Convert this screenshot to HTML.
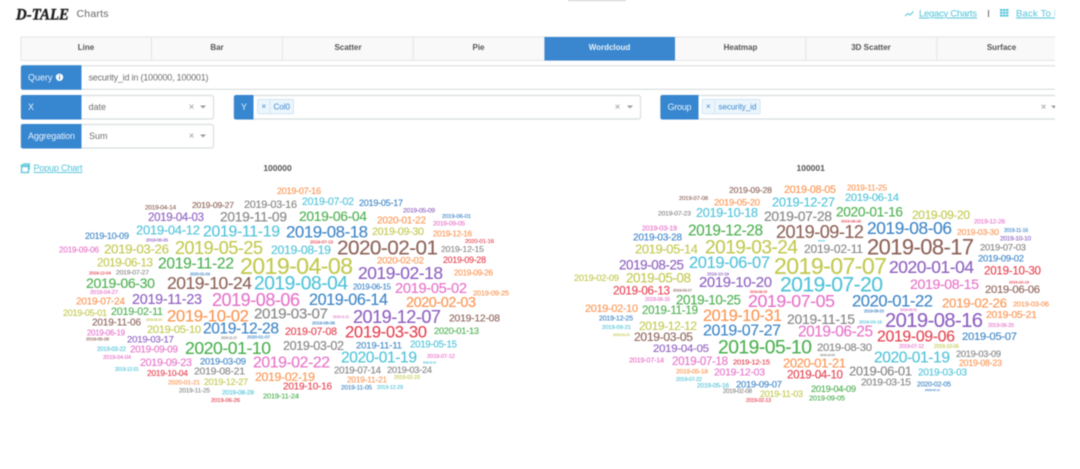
<!DOCTYPE html>
<html><head><meta charset="utf-8"><title>D-Tale Charts</title>
<style>
html,body{margin:0;padding:0;background:#fff;width:1080px;height:469px;overflow:hidden}
svg{display:block;filter:blur(.45px)}
text{font-family:"Liberation Sans",sans-serif}
#w text{dominant-baseline:central;stroke-width:.12}
.b{fill:#3d85c6;stroke:#3d85c6}.o{fill:#fb9450;stroke:#fb9450}.g{fill:#4cb050;stroke:#4cb050}.r{fill:#e5404f;stroke:#e5404f}.p{fill:#8e5fc0;stroke:#8e5fc0}.n{fill:#8d6258;stroke:#8d6258}.k{fill:#e672c9;stroke:#e672c9}.y{fill:#858585;stroke:#858585}.l{fill:#c2c94f;stroke:#c2c94f}.c{fill:#4fc3d9;stroke:#4fc3d9}
.t{font-size:8px;font-weight:bold;fill:#555;text-anchor:middle}
.v{font-size:9px;fill:#6f6f6f}
.w{font-size:9px;fill:#e8f1fa}
.x{font-size:10px;fill:#999;text-anchor:middle}
.h{font-size:8px;fill:#3a87cf}
.a{font-size:9.5px;fill:#4fc3d9;text-decoration:underline}
</style></head><body>
<svg width="1080" height="469" viewBox="0 0 1080 469" xmlns="http://www.w3.org/2000/svg">
<rect width="1080" height="469" fill="#fff"/>
<rect x="568" y="-1" width="58" height="2" fill="#ccc"/>
<!-- header -->
<text x="16" y="19.500" font-size="15.500" font-weight="bold" font-style="italic" fill="#222" stroke="#222" stroke-width=".4" textLength="53" lengthAdjust="spacingAndGlyphs" style="font-family:'Liberation Serif',serif">D-TALE</text>
<text x="76.500" y="16.800" font-size="10.500" fill="#666" textLength="32">Charts</text>
<path d="M905 16l3-2.500 2 1.500 3.500-3.500" fill="none" stroke="#4fc3d9" stroke-width="1"/>
<text class="a" x="919" y="16.500" textLength="58">Legacy Charts</text>
<rect x="988" y="10" width="1" height="7" fill="#666"/>
<g fill="#4fc3d9"><rect x="1000" y="9" width="2.400" height="2"/><rect x="1003" y="9" width="2.400" height="2"/><rect x="1006" y="9" width="2.400" height="2"/><rect x="1000" y="11.800" width="2.400" height="2"/><rect x="1003" y="11.800" width="2.400" height="2"/><rect x="1006" y="11.800" width="2.400" height="2"/><rect x="1000" y="14.600" width="2.400" height="2"/><rect x="1003" y="14.600" width="2.400" height="2"/><rect x="1006" y="14.600" width="2.400" height="2"/></g>
<text class="a" x="1016" y="16.500" style="letter-spacing:.2px">Back To Data</text>
<rect x="1055" y="0" width="25" height="30" fill="#fff"/>
<!-- tabs -->
<rect x="21" y="37" width="1034" height="23.500" fill="#f9f9f9"/>
<path d="M21 60.500V37H1055M21 60.500H1055M151.500 37V60.500M282.400 37V60.500M413.200 37V60.500M544.500 37V60.500M805.800 37V60.500M936.700 37V60.500" fill="none" stroke="#e4e4e4" stroke-width="1"/>
<rect x="544.500" y="37" width="130.500" height="23.500" fill="#3a87cf"/>
<text class="t" x="86" y="50">Line</text>
<text class="t" x="217" y="50">Bar</text>
<text class="t" x="348" y="50">Scatter</text>
<text class="t" x="478.500" y="50">Pie</text>
<text class="t" x="609.500" y="50" style="fill:#e8f1fa">Wordcloud</text>
<text class="t" x="740.500" y="50">Heatmap</text>
<text class="t" x="871" y="50">3D Scatter</text>
<text class="t" x="1001.500" y="50">Surface</text>
<!-- query -->
<rect x="21" y="65.800" width="1040" height="23.500" rx="2" fill="#fff" stroke="#d9dee0" stroke-width="1.200"/>
<rect x="1055" y="60" width="25" height="32" fill="#fff"/>
<path d="M23 65.300H81.500V89.800H23a2 2 0 0 1-2-2V67.300a2 2 0 0 1 2-2z" fill="#3686d0"/>
<text class="w" x="28" y="80.500">Query</text>
<circle cx="59.500" cy="77.300" r="3.700" fill="#fff"/><rect x="59" y="76.500" width="1" height="3" fill="#3686d0"/><rect x="59" y="75" width="1" height="1" fill="#3686d0"/>
<text class="v" x="88.500" y="80.500" textLength="120">security_id in (100000, 100001)</text>
<!-- X -->
<rect x="21" y="95.500" width="192.500" height="23.500" rx="2" fill="#fff" stroke="#d9dee0" stroke-width="1.200"/>
<path d="M23 95H81.500V119.500H23a2 2 0 0 1-2-2V97a2 2 0 0 1 2-2z" fill="#3686d0"/>
<text class="w" x="28" y="110">X</text>
<text class="v" x="88.500" y="110">date</text>
<text class="x" x="191.500" y="110">×</text>
<path d="M200 105.500h6l-3 3z" fill="#999"/>
<!-- Y -->
<rect x="234" y="95.500" width="406.500" height="23.500" rx="2" fill="#fff" stroke="#d9dee0" stroke-width="1.200"/>
<path d="M236 95H253.500V119.500H236a2 2 0 0 1-2-2V97a2 2 0 0 1 2-2z" fill="#3686d0"/>
<text class="w" x="241" y="110">Y</text>
<rect x="257.600" y="99.300" width="36" height="14.500" rx="1.500" fill="#ebf5fc" stroke="#cfe3f2" stroke-width=".8"/>
<path d="M270 99.300V113.800" stroke="#cfe3f2" stroke-width=".8"/>
<text class="h" x="261.500" y="109">×</text>
<text class="h" x="273.500" y="109.500" textLength="16.500">Col0</text>
<text class="x" x="617.500" y="110">×</text>
<path d="M627 105.500h6l-3 3z" fill="#999"/>
<!-- Group -->
<rect x="660.500" y="95.500" width="400" height="23.500" rx="2" fill="#fff" stroke="#d9dee0" stroke-width="1.200"/>
<path d="M662.500 95H698.500V119.500H662.500a2 2 0 0 1-2-2V97a2 2 0 0 1 2-2z" fill="#3686d0"/>
<text class="w" x="667.500" y="110" textLength="24">Group</text>
<rect x="702.200" y="99.300" width="58" height="14.500" rx="1.500" fill="#ebf5fc" stroke="#cfe3f2" stroke-width=".8"/>
<path d="M714.600 99.300V113.800" stroke="#cfe3f2" stroke-width=".8"/>
<text class="h" x="706" y="109">×</text>
<text class="h" x="718.500" y="109.500" textLength="38">security_id</text>
<text class="x" x="1043.500" y="110">×</text>
<path d="M1051 105.500h6l-3 3z" fill="#999"/>
<rect x="1055" y="93" width="25" height="30" fill="#fff"/>
<!-- Aggregation -->
<rect x="21" y="124.500" width="192.500" height="23.500" rx="2" fill="#fff" stroke="#d9dee0" stroke-width="1.200"/>
<path d="M23 124H81.500V148.500H23a2 2 0 0 1-2-2V126a2 2 0 0 1 2-2z" fill="#3686d0"/>
<text class="w" x="28" y="139" textLength="47">Aggregation</text>
<text class="v" x="89" y="139">Sum</text>
<text class="x" x="191.500" y="139">×</text>
<path d="M200 134.500h6l-3 3z" fill="#999"/>
<!-- popup -->
<path d="M21.500 165h7v7.500h-7zM21.500 166.500h7" fill="none" stroke="#4fc3d9" stroke-width="1.200"/>
<path d="M23 163.500h6.500v6" fill="none" stroke="#4fc3d9" stroke-width=".8"/>
<text class="a" x="33.500" y="171" textLength="49" style="font-size:9px">Popup Chart</text>
<text x="277.500" y="171" font-size="8.500" font-weight="bold" fill="#555" text-anchor="middle">100000</text>
<text x="810.700" y="171" font-size="8.500" font-weight="bold" fill="#555" text-anchor="middle">100001</text>
<!-- left cloud -->
<g id="w">
<text class="n" x="145" y="208" textLength="31" font-size="6.400">2019-04-14</text>
<text class="n" x="192" y="205" textLength="42" font-size="8.600">2019-09-27</text>
<text class="y" x="244" y="205" textLength="53" font-size="10.900">2019-03-16</text>
<text class="p" x="148" y="218" textLength="56" font-size="11.500">2019-04-03</text>
<text class="y" x="220" y="217" textLength="67" font-size="13.800">2019-11-09</text>
<text class="c" x="136" y="230" textLength="64" font-size="13.100">2019-04-12</text>
<text class="c" x="203" y="232" textLength="77" font-size="15.800">2019-11-19</text>
<text class="b" x="85" y="236" textLength="44" font-size="9.100">2019-10-09</text>
<text class="p" x="146" y="240" textLength="22" font-size="4.600">2019-05-25</text>
<text class="k" x="59" y="250" textLength="40" font-size="8.100">2019-09-06</text>
<text class="l" x="104" y="249" textLength="65" font-size="13.300">2019-03-26</text>
<text class="l" x="175" y="248" textLength="88" font-size="18">2019-05-25</text>
<text class="c" x="271" y="250" textLength="60" font-size="12.300">2019-08-19</text>
<text class="l" x="97" y="263" textLength="56" font-size="11.600">2019-06-13</text>
<text class="g" x="158" y="264" textLength="76" font-size="15.600">2019-11-22</text>
<text class="l" x="240" y="266" textLength="113" font-size="23.200">2019-04-08</text>
<text class="r" x="89" y="273" textLength="22" font-size="4.600">2019-12-04</text>
<text class="y" x="116" y="273" textLength="33" font-size="6.700">2019-07-27</text>
<text class="b" x="190" y="274" textLength="20" font-size="4.100">2020-01-04</text>
<text class="g" x="86" y="283" textLength="69" font-size="14.100">2019-06-30</text>
<text class="n" x="167" y="283" textLength="85" font-size="17.500">2019-10-24</text>
<text class="c" x="254" y="284" textLength="94" font-size="19.200">2019-08-04</text>
<text class="k" x="90" y="293" textLength="28" font-size="5.800">2019-04-27</text>
<text class="o" x="76" y="302" textLength="49" font-size="10">2019-07-24</text>
<text class="p" x="132" y="300" textLength="70" font-size="14.300">2019-11-23</text>
<text class="k" x="212" y="300" textLength="88" font-size="18">2019-08-06</text>
<text class="b" x="309" y="300" textLength="79" font-size="16.200">2019-06-14</text>
<text class="o" x="406" y="303" textLength="70" font-size="14.400">2020-02-03</text>
<text class="l" x="63" y="313" textLength="44" font-size="9">2019-05-01</text>
<text class="g" x="111" y="312" textLength="52" font-size="10.700">2019-02-11</text>
<text class="l" x="146" y="320" textLength="16" font-size="3.200">2019-05-24</text>
<text class="o" x="167" y="316" textLength="82" font-size="16.800">2019-10-02</text>
<text class="y" x="254" y="314" textLength="74" font-size="15.200">2019-03-07</text>
<text class="p" x="353" y="317" textLength="88" font-size="18.100">2019-12-07</text>
<text class="k" x="333" y="317" textLength="16" font-size="3.300">2019-11-11</text>
<text class="n" x="449" y="319" textLength="51" font-size="10.400">2019-12-08</text>
<text class="n" x="92" y="323" textLength="49" font-size="10">2019-11-06</text>
<text class="k" x="87" y="333" textLength="38" font-size="7.800">2019-06-19</text>
<text class="l" x="147" y="330" textLength="54" font-size="11.100">2019-05-10</text>
<text class="b" x="203" y="329" textLength="76" font-size="15.600">2019-12-28</text>
<text class="b" x="312" y="324" textLength="23" font-size="4.800">2019-08-06</text>
<text class="r" x="285" y="332" textLength="52" font-size="10.600">2019-07-08</text>
<text class="r" x="345" y="332" textLength="82" font-size="16.700">2019-03-30</text>
<text class="g" x="434" y="331" textLength="45" font-size="9.200">2020-01-13</text>
<text class="n" x="86" y="340" textLength="23" font-size="4.800">2019-05-28</text>
<text class="p" x="127" y="340" textLength="47" font-size="9.600">2019-03-17</text>
<text class="y" x="221" y="338" textLength="16" font-size="3.200">2019-11-27</text>
<text class="b" x="247" y="338" textLength="23" font-size="4.800">2020-01-07</text>
<text class="c" x="97" y="350" textLength="29" font-size="6">2019-03-22</text>
<text class="k" x="130" y="350" textLength="48" font-size="9.900">2019-09-09</text>
<text class="g" x="185" y="348" textLength="86" font-size="17.600">2020-01-10</text>
<text class="y" x="283" y="346" textLength="61" font-size="12.600">2019-03-02</text>
<text class="b" x="356" y="345" textLength="46" font-size="9.400">2019-11-11</text>
<text class="c" x="410" y="345" textLength="47" font-size="9.700">2019-05-15</text>
<text class="k" x="103" y="358" textLength="28" font-size="5.800">2019-04-04</text>
<text class="k" x="140" y="363" textLength="52" font-size="10.700">2019-09-23</text>
<text class="b" x="200" y="361" textLength="46" font-size="9.400">2019-03-09</text>
<text class="k" x="253" y="363" textLength="77" font-size="15.800">2019-02-22</text>
<text class="c" x="341" y="358" textLength="76" font-size="15.600">2020-01-19</text>
<text class="k" x="427" y="357" textLength="28" font-size="5.800">2019-07-12</text>
<text class="c" x="423" y="363" textLength="13" font-size="2.600">2020-01-20</text>
<text class="c" x="115" y="370" textLength="24" font-size="5">2019-12-01</text>
<text class="r" x="147" y="373" textLength="41" font-size="8.300">2019-10-04</text>
<text class="y" x="194" y="372" textLength="51" font-size="10.400">2019-08-21</text>
<text class="y" x="334" y="371" textLength="47" font-size="9.700">2019-07-14</text>
<text class="y" x="387" y="370" textLength="45" font-size="9.300">2019-03-24</text>
<text class="o" x="255" y="377" textLength="60" font-size="12.300">2019-02-19</text>
<text class="o" x="347" y="380" textLength="40" font-size="8.100">2019-11-21</text>
<text class="l" x="394" y="378" textLength="26" font-size="5.300">2019-02-23</text>
<text class="o" x="168" y="383" textLength="32" font-size="6.600">2020-01-21</text>
<text class="l" x="204" y="382" textLength="44" font-size="9">2019-12-27</text>
<text class="r" x="283" y="387" textLength="49" font-size="10">2019-10-16</text>
<text class="b" x="341" y="388" textLength="31" font-size="6.300">2019-11-05</text>
<text class="c" x="377" y="388" textLength="26" font-size="5.200">2019-12-29</text>
<text class="y" x="179" y="391" textLength="31" font-size="6.300">2019-11-25</text>
<text class="c" x="222" y="393" textLength="32" font-size="6.600">2019-08-28</text>
<text class="g" x="263" y="396" textLength="36" font-size="7.400">2019-11-24</text>
<text class="r" x="211" y="401" textLength="29" font-size="5.900">2019-06-26</text>
<text class="o" x="277" y="191" textLength="44" font-size="9.100">2019-07-16</text>
<text class="c" x="302" y="202" textLength="52" font-size="10.600">2019-07-02</text>
<text class="b" x="359" y="203" textLength="44" font-size="9">2019-05-17</text>
<text class="p" x="403" y="211" textLength="32" font-size="6.600">2019-05-09</text>
<text class="b" x="442" y="217" textLength="29" font-size="5.900">2019-06-01</text>
<text class="g" x="299" y="216" textLength="68" font-size="13.900">2019-06-04</text>
<text class="o" x="377" y="221" textLength="49" font-size="10">2020-01-22</text>
<text class="k" x="433" y="224" textLength="32" font-size="6.600">2019-09-05</text>
<text class="b" x="286" y="232" textLength="82" font-size="16.900">2019-08-18</text>
<text class="l" x="372" y="232" textLength="52" font-size="10.700">2019-09-30</text>
<text class="o" x="433" y="234" textLength="39" font-size="8.100">2019-12-16</text>
<text class="r" x="310" y="242" textLength="23" font-size="4.600">2019-07-13</text>
<text class="n" x="337" y="248" textLength="101" font-size="20.700">2020-02-01</text>
<text class="r" x="465" y="242" textLength="29" font-size="5.900">2020-01-16</text>
<text class="y" x="441" y="249" textLength="43" font-size="8.700">2019-12-15</text>
<text class="o" x="377" y="261" textLength="47" font-size="9.600">2020-02-02</text>
<text class="r" x="443" y="260" textLength="43" font-size="8.800">2019-09-28</text>
<text class="p" x="358" y="273" textLength="85" font-size="17.400">2019-02-18</text>
<text class="o" x="454" y="273" textLength="39" font-size="8.100">2019-09-26</text>
<text class="b" x="353" y="287" textLength="38" font-size="7.800">2019-06-15</text>
<text class="k" x="395" y="289" textLength="72" font-size="14.700">2019-05-02</text>
<text class="o" x="473" y="293" textLength="36" font-size="7.400">2019-09-25</text>
<!-- right cloud -->
<text class="n" x="729" y="190" textLength="43" font-size="8.700">2019-09-28</text>
<text class="o" x="784" y="190" textLength="52" font-size="10.700">2019-08-05</text>
<text class="o" x="847" y="188" textLength="40" font-size="8.200">2019-11-25</text>
<text class="n" x="679" y="199" textLength="29" font-size="5.900">2019-07-08</text>
<text class="o" x="714" y="202" textLength="46" font-size="9.400">2019-05-20</text>
<text class="c" x="772" y="202" textLength="63" font-size="12.800">2019-12-27</text>
<text class="c" x="845" y="198" textLength="54" font-size="11.100">2019-06-14</text>
<text class="y" x="658" y="214" textLength="33" font-size="6.700">2019-07-23</text>
<text class="c" x="696" y="213" textLength="62" font-size="12.600">2019-10-18</text>
<text class="y" x="764" y="216" textLength="68" font-size="14">2019-07-28</text>
<text class="g" x="836" y="212" textLength="67" font-size="13.700">2020-01-16</text>
<text class="l" x="912" y="215" textLength="58" font-size="12">2019-09-20</text>
<text class="k" x="974" y="222" textLength="31" font-size="6.400">2019-12-26</text>
<text class="k" x="642" y="228" textLength="35" font-size="7.200">2019-03-19</text>
<text class="g" x="688" y="231" textLength="75" font-size="15.400">2019-12-28</text>
<text class="n" x="776" y="232" textLength="88" font-size="18.100">2019-09-12</text>
<text class="r" x="841" y="221" textLength="20" font-size="4">2019-08-28</text>
<text class="b" x="867" y="228" textLength="85" font-size="17.300">2019-08-06</text>
<text class="o" x="957" y="232" textLength="42" font-size="8.600">2019-03-30</text>
<text class="b" x="1004" y="231" textLength="24" font-size="5">2019-11-16</text>
<text class="b" x="633" y="238" textLength="49" font-size="10">2019-03-28</text>
<text class="p" x="1000" y="239" textLength="31" font-size="6.400">2019-10-10</text>
<text class="c" x="818" y="242" textLength="7" font-size="1.500">2019-12-04</text>
<text class="l" x="635" y="249" textLength="63" font-size="13">2019-05-14</text>
<text class="l" x="705" y="248" textLength="93" font-size="19.100">2019-03-24</text>
<text class="y" x="804" y="249" textLength="59" font-size="12">2019-02-11</text>
<text class="n" x="867" y="247" textLength="107" font-size="21.900">2019-08-17</text>
<text class="y" x="980" y="247" textLength="46" font-size="9.400">2019-07-03</text>
<text class="b" x="978" y="258" textLength="46" font-size="9.400">2019-09-02</text>
<text class="p" x="619" y="265" textLength="65" font-size="13.400">2019-08-25</text>
<text class="c" x="689" y="263" textLength="81" font-size="16.500">2019-06-07</text>
<text class="l" x="774" y="266" textLength="113" font-size="23.100">2019-07-07</text>
<text class="p" x="889" y="267" textLength="85" font-size="17.400">2020-01-04</text>
<text class="r" x="984" y="271" textLength="57" font-size="11.600">2019-10-30</text>
<text class="l" x="574" y="278" textLength="45" font-size="9.200">2019-02-09</text>
<text class="l" x="626" y="278" textLength="65" font-size="13.400">2019-05-08</text>
<text class="p" x="707" y="274" textLength="22" font-size="4.500">2019-10-19</text>
<text class="p" x="699" y="283" textLength="73" font-size="14.900">2019-10-20</text>
<text class="c" x="780" y="285" textLength="103" font-size="21.200">2019-07-20</text>
<text class="k" x="910" y="285" textLength="69" font-size="14.200">2019-08-15</text>
<text class="r" x="1009" y="282" textLength="20" font-size="4">2019-02-19</text>
<text class="n" x="985" y="290" textLength="55" font-size="11.300">2019-06-06</text>
<text class="r" x="613" y="291" textLength="57" font-size="11.600">2019-06-13</text>
<text class="n" x="673" y="290" textLength="19" font-size="4">2019-03-17</text>
<text class="r" x="750" y="292" textLength="17" font-size="3.400">2019-06-19</text>
<text class="g" x="676" y="300" textLength="65" font-size="13.400">2019-10-25</text>
<text class="k" x="748" y="301" textLength="87" font-size="17.800">2019-07-05</text>
<text class="k" x="645" y="300" textLength="25" font-size="5.100">2019-06-15</text>
<text class="b" x="852" y="301" textLength="81" font-size="16.600">2020-01-22</text>
<text class="o" x="942" y="303" textLength="65" font-size="13.300">2019-02-26</text>
<text class="o" x="1013" y="304" textLength="36" font-size="7.400">2019-03-06</text>
<text class="o" x="585" y="309" textLength="53" font-size="10.900">2019-02-10</text>
<text class="g" x="642" y="311" textLength="56" font-size="11.500">2019-11-19</text>
<text class="o" x="703" y="316" textLength="79" font-size="16.300">2019-10-31</text>
<text class="y" x="787" y="319" textLength="68" font-size="13.900">2019-11-15</text>
<text class="b" x="864" y="311" textLength="20" font-size="4.100">2019-08-20</text>
<text class="k" x="900" y="310" textLength="17" font-size="3.400">2019-05-31</text>
<text class="c" x="859" y="322" textLength="23" font-size="4.600">2019-03-15</text>
<text class="p" x="885" y="321" textLength="98" font-size="20.200">2019-08-16</text>
<text class="o" x="986" y="315" textLength="51" font-size="10.500">2019-05-21</text>
<text class="k" x="988" y="326" textLength="26" font-size="5.300">2019-06-20</text>
<text class="b" x="599" y="319" textLength="34" font-size="7">2019-12-25</text>
<text class="c" x="602" y="328" textLength="29" font-size="5.900">2019-09-21</text>
<text class="l" x="639" y="326" textLength="58" font-size="12">2019-12-12</text>
<text class="b" x="703" y="331" textLength="78" font-size="16">2019-07-27</text>
<text class="k" x="798" y="332" textLength="75" font-size="15.400">2019-06-25</text>
<text class="r" x="877" y="337" textLength="78" font-size="15.900">2019-09-06</text>
<text class="b" x="962" y="337" textLength="55" font-size="11.300">2019-05-07</text>
<text class="l" x="613" y="335" textLength="17" font-size="3.400">2019-01-21</text>
<text class="n" x="634" y="337" textLength="59" font-size="12.100">2019-03-05</text>
<text class="p" x="653" y="349" textLength="56" font-size="11.400">2019-04-05</text>
<text class="g" x="718" y="348" textLength="94" font-size="19.300">2019-05-10</text>
<text class="y" x="817" y="348" textLength="55" font-size="11.300">2019-08-30</text>
<text class="k" x="899" y="347" textLength="25" font-size="5.300">2019-07-12</text>
<text class="l" x="934" y="347" textLength="25" font-size="5.200">2019-10-05</text>
<text class="k" x="629" y="360" textLength="35" font-size="7.200">2019-07-14</text>
<text class="k" x="672" y="362" textLength="56" font-size="11.500">2019-07-18</text>
<text class="r" x="733" y="362" textLength="37" font-size="7.700">2019-12-15</text>
<text class="o" x="783" y="363" textLength="63" font-size="13">2020-01-21</text>
<text class="y" x="820" y="355" textLength="15" font-size="3.100">2019-10-23</text>
<text class="c" x="874" y="358" textLength="76" font-size="15.600">2020-01-19</text>
<text class="y" x="956" y="354" textLength="45" font-size="9.300">2019-03-09</text>
<text class="o" x="959" y="363" textLength="43" font-size="8.800">2019-08-23</text>
<text class="o" x="676" y="372" textLength="32" font-size="6.600">2019-05-18</text>
<text class="k" x="714" y="373" textLength="51" font-size="10.400">2019-12-03</text>
<text class="r" x="787" y="375" textLength="56" font-size="11.600">2019-04-10</text>
<text class="y" x="849" y="371" textLength="63" font-size="13">2019-06-01</text>
<text class="c" x="918" y="373" textLength="49" font-size="10">2019-03-03</text>
<text class="c" x="676" y="380" textLength="26" font-size="5.400">2019-07-22</text>
<text class="c" x="697" y="386" textLength="32" font-size="6.500">2019-05-16</text>
<text class="b" x="736" y="384" textLength="46" font-size="9.400">2019-09-07</text>
<text class="y" x="861" y="383" textLength="50" font-size="10.300">2019-03-15</text>
<text class="b" x="917" y="385" textLength="34" font-size="6.900">2020-02-05</text>
<text class="b" x="925" y="390" textLength="15" font-size="3.100">2019-01-11</text>
<text class="y" x="723" y="392" textLength="29" font-size="6">2019-02-08</text>
<text class="l" x="760" y="394" textLength="43" font-size="8.800">2019-11-03</text>
<text class="g" x="811" y="389" textLength="45" font-size="9.300">2019-04-09</text>
<text class="g" x="809" y="398" textLength="36" font-size="7.400">2019-09-05</text>
<text class="r" x="746" y="401" textLength="25" font-size="5.200">2019-02-13</text>
</g>
</svg>
</body></html>
